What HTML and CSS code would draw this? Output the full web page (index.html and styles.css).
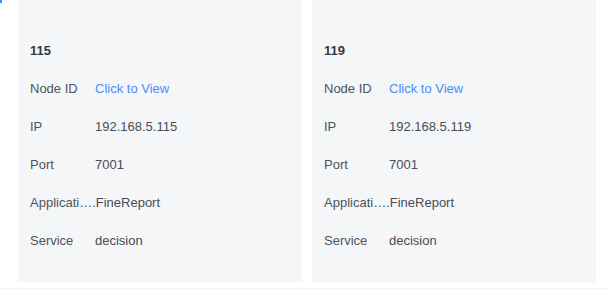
FILE: index.html
```html
<!DOCTYPE html>
<html lang="en">
<head>
  <meta charset="UTF-8">
  <title>Nodes</title>
  <link rel="stylesheet" href="styles.css">
</head>
<body>
  <div class="corner-mark"></div>

  <div class="node-list">
    <!-- Node 115 -->
    <div class="node-card">
      <div class="node-title">115</div>
      <div class="node-row">
        <span class="node-label">Node ID</span>
        <a class="node-link" href="#">Click to View</a>
      </div>
      <div class="node-row">
        <span class="node-label">IP</span>
        <span class="node-value">192.168.5.115</span>
      </div>
      <div class="node-row">
        <span class="node-label">Port</span>
        <span class="node-value">7001</span>
      </div>
      <div class="node-row">
        <span class="node-label">Applicati&hellip;.</span>
        <span class="node-value">FineReport</span>
      </div>
      <div class="node-row">
        <span class="node-label">Service</span>
        <span class="node-value">decision</span>
      </div>
    </div>

    <!-- Node 119 -->
    <div class="node-card">
      <div class="node-title">119</div>
      <div class="node-row">
        <span class="node-label">Node ID</span>
        <a class="node-link" href="#">Click to View</a>
      </div>
      <div class="node-row">
        <span class="node-label">IP</span>
        <span class="node-value">192.168.5.119</span>
      </div>
      <div class="node-row">
        <span class="node-label">Port</span>
        <span class="node-value">7001</span>
      </div>
      <div class="node-row">
        <span class="node-label">Applicati&hellip;.</span>
        <span class="node-value">FineReport</span>
      </div>
      <div class="node-row">
        <span class="node-label">Service</span>
        <span class="node-value">decision</span>
      </div>
    </div>
  </div>
</body>
</html>
```

FILE: styles.css
```css
/* Reset */
* {
  margin: 0;
  padding: 0;
  box-sizing: border-box;
}

body {
  width: 608px;
  height: 290px;
  overflow: hidden;
  background: #fff;
  font-family: "Liberation Sans", Arial, sans-serif;
  font-size: 13px;
  color: #4f535b;
  position: relative;
}

/* clipped selection marker at the top-left corner */
.corner-mark {
  position: absolute;
  top: 0;
  left: 0;
  width: 2px;
  height: 3px;
  background: #3e8df7;
}

/* Card row */
.node-list {
  display: flex;
  gap: 10px;
  padding-left: 18px;
  height: 289px;
  border-bottom: 1px solid #f6f7f8;
}

.node-card {
  width: 284px;
  height: 282px;
  background: #f5f6f8;
  padding: 32px 12px 22px;
}

.node-title,
.node-row {
  height: 38px;
  line-height: 38px;
}

.node-title {
  font-weight: bold;
  color: #363940;
}

.node-row {
  display: flex;
}

.node-label {
  min-width: 65px;
  flex-shrink: 0;
  white-space: nowrap;
}

.node-value {
  color: #484c55;
}

.node-link {
  color: #4a8df5;
  text-decoration: none;
}
```
